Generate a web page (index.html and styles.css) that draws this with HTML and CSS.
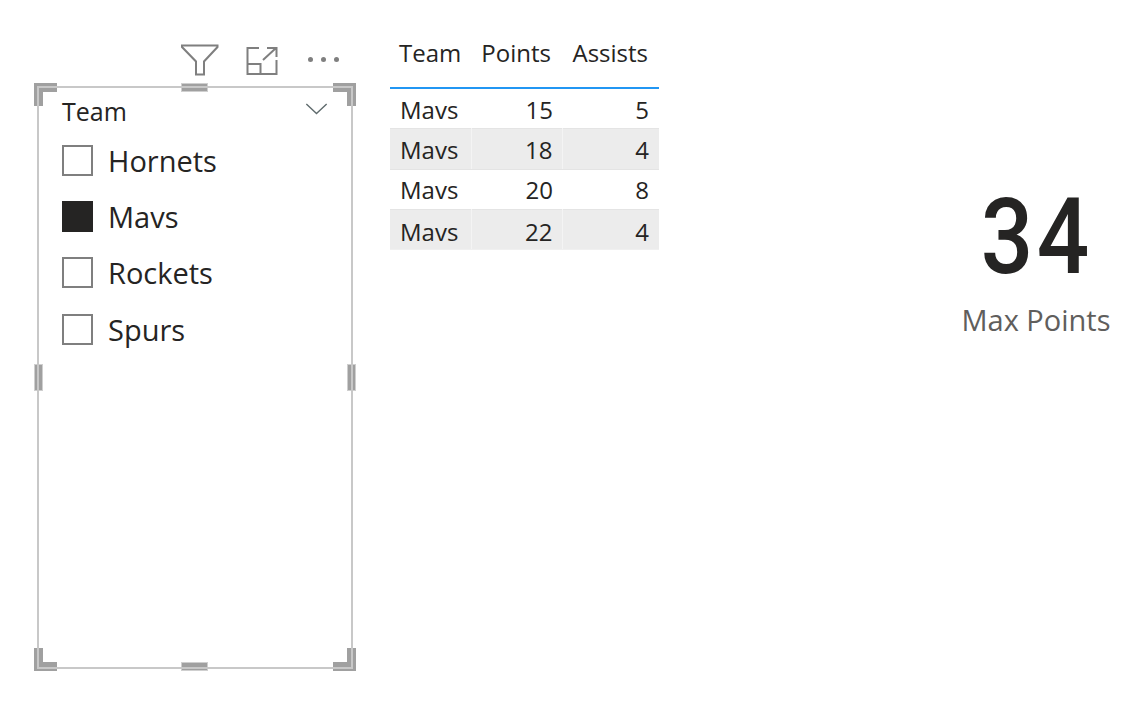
FILE: index.html
```html
<!DOCTYPE html>
<html lang="en">
<head>
    <meta charset="UTF-8">
    <title>Report canvas</title>
    <link rel="stylesheet" href="styles.css">
</head>
<body>
    <div class="canvas">
        <div class="visual-actions">
            <svg class="icon-filter" viewBox="0 0 38 32" fill="none" stroke="#7f7f7f" stroke-width="2">
                <path d="M1 1.500H36.500V3L23 17.500V30.500H15V17.500L1 3Z"/>
            </svg>
            <svg class="icon-focus" viewBox="0 0 32 30" fill="none" stroke="#7f7f7f" stroke-width="2">
                <path d="M13 2H1.500V28H30.500V14M1.500 18H14.500V28M17 14L30 2M21 2H30.500V11"/>
            </svg>
            <div class="icon-more"><span></span><span></span><span></span></div>
        </div>

        <div class="slicer">
            <span class="handle corner tl"></span>
            <span class="handle corner tr"></span>
            <span class="handle corner bl"></span>
            <span class="handle corner br"></span>
            <span class="handle bar top"></span>
            <span class="handle bar bottom"></span>
            <span class="handle bar-v left"></span>
            <span class="handle bar-v right"></span>

            <div class="slicer-header">
                <span>Team</span>
                <svg class="chevron" viewBox="0 0 24 13" fill="none" stroke="#5f6b6d" stroke-width="1.500">
                    <path d="M1 1L12 11.500L23 1"/>
                </svg>
            </div>
            <ul class="slicer-list">
                <li><span class="check"></span>Hornets</li>
                <li><span class="check checked"></span>Mavs</li>
                <li><span class="check"></span>Rockets</li>
                <li><span class="check"></span>Spurs</li>
            </ul>
        </div>

        <table class="data-table">
            <thead>
                <tr><th class="col-team">Team</th><th class="col-points">Points</th><th class="col-assists">Assists</th></tr>
            </thead>
            <tbody>
                <tr class="row-a"><td>Mavs</td><td class="num">15</td><td class="num">5</td></tr>
                <tr class="row-b"><td>Mavs</td><td class="num">18</td><td class="num">4</td></tr>
                <tr><td>Mavs</td><td class="num">20</td><td class="num">8</td></tr>
                <tr class="row-b row-last"><td>Mavs</td><td class="num">22</td><td class="num">4</td></tr>
            </tbody>
        </table>

        <div class="card">
            <div class="card-value">34</div>
            <div class="card-label">Max Points</div>
        </div>
    </div>
</body>
</html>
```
FILE: styles.css
```css
* {
    box-sizing: border-box;
    margin: 0;
    padding: 0;
}

body {
    background: #fff;
    font-family: "Open Sans", "Noto Sans", sans-serif;
    color: #252423;
    overflow: hidden;
}

.canvas {
    position: relative;
    width: 1136px;
    height: 706px;
}

/* visual header above the slicer */
.visual-actions {
    position: absolute;
    left: 181px;
    top: 44px;
    display: flex;
    align-items: flex-start;
}

.icon-filter {
    width: 38px;
    height: 32px;
}

.icon-focus {
    width: 32px;
    height: 30px;
    margin-left: 27px;
    margin-top: 2px;
}

.icon-more {
    display: flex;
    gap: 8px;
    margin-left: 30px;
    margin-top: 13px;
}

.icon-more span {
    width: 5px;
    height: 5px;
    border-radius: 50%;
    background: #7f7f7f;
}

/* slicer */
.slicer {
    position: absolute;
    left: 37px;
    top: 86px;
    width: 316px;
    height: 583px;
    border: 2px solid #c8c8c8;
    padding: 6px 23px;
}

/* the frame line runs over the handles */
.slicer::after {
    content: "";
    position: absolute;
    inset: -2px;
    border: 2px solid #c8c8c8;
    pointer-events: none;
}

.handle {
    position: absolute;
    display: block;
}

.bar {
    left: 142px;
    width: 27px;
    height: 9px;
    background: #a0a0a0;
    border: 1px solid #cfcfcf;
}

.bar.top { top: -5px; }
.bar.bottom { bottom: -4px; }

.bar-v {
    top: 276px;
    width: 9px;
    height: 27px;
    background: #a0a0a0;
    border: 1px solid #cfcfcf;
}

.bar-v.left { left: -5px; }
.bar-v.right { right: -5px; }

.corner {
    width: 23px;
    height: 23px;
    border: 0 solid #a0a0a0;
}

.corner.tl { left: -5px; top: -5px; border-width: 9px 0 0 9px; }
.corner.tr { right: -5px; top: -5px; border-width: 9px 9px 0 0; }
.corner.bl { left: -5px; bottom: -4px; border-width: 0 0 9px 9px; }
.corner.br { right: -5px; bottom: -4px; border-width: 0 9px 9px 0; }

.slicer-header {
    display: flex;
    justify-content: space-between;
    align-items: flex-start;
    font-size: 25px;
    font-weight: 500;
    line-height: 34px;
}

.chevron {
    width: 23px;
    height: 12px;
    margin-top: 9px;
}

.slicer-list {
    list-style: none;
    margin-top: 4px;
}

.slicer-list li {
    display: flex;
    align-items: center;
    gap: 15px;
    height: 56.300px;
    font-size: 29px;
}

.check {
    width: 31px;
    height: 31px;
    border: 2px solid #7f7f7f;
}

.check.checked {
    background: #252423;
    border-color: #252423;
}

/* table */
.data-table {
    position: absolute;
    left: 390px;
    top: 29px;
    width: 269px;
    border-collapse: collapse;
    table-layout: fixed;
    font-size: 24px;
}

.data-table th {
    height: 59px;
    font-weight: 400;
    text-align: right;
    padding: 0 11px 11px 0;
    border-bottom: 2px solid #2196f3;
}

.data-table th.col-team { text-align: left; padding-left: 9px; width: 81px; }
.data-table th.col-points { width: 91px; }
.data-table th.col-assists { width: 97px; }

.data-table td {
    height: 40px;
    padding: 1px 10px 0;
}

.data-table td.num { text-align: right; }
.data-table td:nth-child(2) { padding-right: 9px; }

.data-table .row-a td { padding-top: 2px; }

.row-b td {
    height: 41px;
    background: #ececec;
    border-top: 1px solid #e4e4e4;
    border-bottom: 1px solid #e4e4e4;
    border-right: 1px solid #f4f4f4;
}

.row-b td:last-child { border-right: 0; }

.data-table .row-last td {
    height: 40px;
    padding-top: 4px;
    border-bottom-color: #f0f0f0;
}

/* card */
.card {
    position: absolute;
    left: 950px;
    top: 175px;
    width: 172px;
    text-align: center;
}

.card-value {
    font-family: Roboto, sans-serif;
    font-size: 105px;
    font-weight: 500;
    line-height: 125px;
    letter-spacing: 4px;
    text-indent: 2px;
    transform: scaleX(0.88);
}

.card-label {
    font-size: 29px;
    line-height: 40px;
    color: #605e5c;
}
```
